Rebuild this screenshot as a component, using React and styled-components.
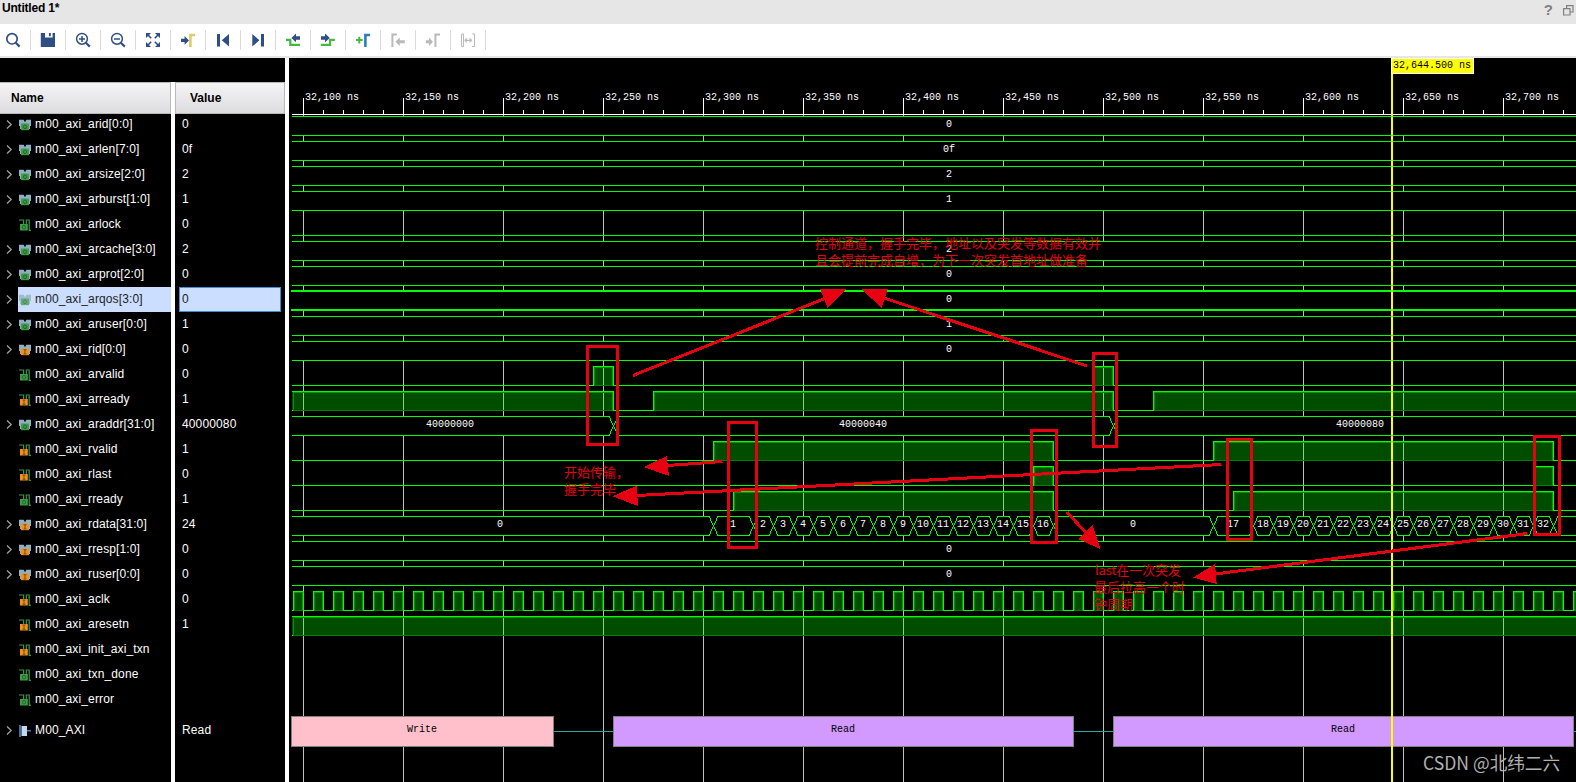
import React from 'react'
import styled, { createGlobalStyle } from 'styled-components'

const GlobalStyle = createGlobalStyle`
    body {
        margin: 0;
        overflow: hidden;
        background: #000;
        font-family: "Liberation Sans", Arial, sans-serif;
        font-size: 12px;
    }
`
const Window = styled.div`
    width: 1576px;
    height: 782px;
    display: flex;
    flex-direction: column;
    overflow: hidden;
`
const TitleBar = styled.div`
    height: 24px;
    flex: none;
    box-sizing: border-box;
    padding: 0 2px 0 2px;
    display: flex;
    justify-content: space-between;
    background: #e6e6e6;
`
const Title = styled.div`
    line-height: 16px;
    font-weight: bold;
    letter-spacing: -0.2px;
    color: #000;
`
const TitleActions = styled.div`
    display: flex;
    gap: 10px;
    padding-top: 2px;
    color: #808080;
    font-size: 15px;
    font-weight: bold;
    line-height: 16px;
    svg {
        margin-top: 3px;
    }
`
const Toolbar = styled.div`
    height: 34px;
    flex: none;
    box-sizing: border-box;
    display: flex;
    padding-top: 6px;
    margin-left: -4px;
    background: #fff;
    border-bottom: 2px solid #e6e6e6;
`
const ToolButton = styled.div`
    width: 35px;
    height: 20px;
    box-sizing: border-box;
    display: flex;
    align-items: center;
    justify-content: center;
    border-right: 1px solid #d9d9d9;
`
const Body = styled.div`
    flex: 1;
    display: flex;
    min-height: 0;
`
const SignalPane = styled.div`
    width: 285px;
    flex: none;
    display: flex;
    padding-top: 24px;
    color: #fff;
    border-right: 4px solid #fff;
`
const Column = styled.div`
    width: ${p => p.$width}px;
    flex: none;
    ${p => p.$divider && 'border-right: 4px solid #fff;'}
`
const ColumnHeader = styled.div`
    position: relative;
    z-index: 1;
    height: 32px;
    line-height: 30px;
    box-sizing: border-box;
    padding-left: ${p => p.$indent}px;
    font-weight: bold;
    color: #000;
    background: linear-gradient(#f4f4f5, #dddde0);
    border: 1px solid #b9b9b9;
    border-left: ${p => (p.$edge ? '1px solid #b9b9b9' : 'none')};
`
const Rows = styled.div`
    margin-top: -2px;
`
const NameRow = styled.div`
    height: ${p => (p.$tall ? 37 : 25)}px;
    display: flex;
    align-items: center;
`
const Toggle = styled.div`
    width: 18px;
    flex: none;
    height: 100%;
    display: flex;
    align-items: center;
    box-sizing: border-box;
    padding-left: 6px;
`
const NameCell = styled.div`
    flex: 1;
    height: 100%;
    display: flex;
    align-items: center;
    gap: 4px;
    padding-left: 1px;
    letter-spacing: 0.13px;
    color: ${p => (p.$selected ? '#222' : '#fff')};
    background: ${p => (p.$selected ? '#ccdeff' : 'transparent')};
    span {
        margin-top: -1px;
    }
`
const ValueCell = styled.div`
    height: ${p => (p.$tall ? 37 : 25)}px;
    line-height: ${p => (p.$tall ? 35 : 22)}px;
    box-sizing: border-box;
    margin: 0 4px;
    padding-left: 2px;
    letter-spacing: 0.13px;
    border: 1px solid ${p => (p.$selected ? '#3c8fd0' : 'transparent')};
    color: ${p => (p.$selected ? '#222' : '#fff')};
    background: ${p => (p.$selected ? '#ccdeff' : 'transparent')};
`
const WavePane = styled.div`
    flex: 1;
    min-width: 0;
    svg {
        display: block;
    }
`
const WaveText = styled.text`
    font-family: "Liberation Mono", "Courier New", monospace;
    font-size: 11px;
    fill: ${p => p.$color || '#fff'};
`
const NoteText = styled.text`
    font-family: "Noto Sans CJK SC", sans-serif;
    font-size: 13px;
    fill: #e60012;
`
const Watermark = styled.text`
    font-family: "Noto Sans CJK SC", sans-serif;
    font-size: 18px;
    fill: #b0b0b0;
`

const NAVY = '#2f4e85'
const GREEN = '#44b93f'
const GREY = '#b9b9b9'

const icons = {
    search: (
        <g fill="none" stroke={NAVY} strokeWidth="1.7">
            <circle cx="7" cy="6.8" r="5.2" />
            <path d="M10.8 10.8L14.6 14.6" strokeWidth="2.2" />
        </g>
    ),
    save: <path fill={NAVY} d="M.8 1H5v4.6h7.6V1H15v14H.8zM9 1h1.8v3.2H9z" />,
    zoomIn: (
        <g fill="none" stroke={NAVY} strokeWidth="1.5">
            <circle cx="7" cy="6.8" r="5.4" />
            <path d="M10.8 10.8L14.8 14.6" strokeWidth="2.2" />
            <path d="M4 7h6M7 4v6" />
        </g>
    ),
    zoomOut: (
        <g fill="none" stroke={NAVY} strokeWidth="1.5">
            <circle cx="7" cy="6.8" r="5.4" />
            <path d="M10.8 10.8L14.8 14.6" strokeWidth="2.2" />
            <path d="M4 7h6" />
        </g>
    ),
    fit: (
        <g fill={NAVY} stroke={NAVY}>
            <path d="M1 1h5L1 6zM15 1v5l-5-5zM1 15v-5l5 5zM15 15h-5l5-5z" stroke="none" />
            <path d="M3 3l3.2 3.2M13 3L9.8 6.2M3 13l3.2-3.2M13 13L9.8 9.8" strokeWidth="1.6" />
        </g>
    ),
    gotoCursor: (
        <g>
            <path fill={NAVY} d="M1 6.8h3.6V4L9 8.4 4.6 12.8V10H1z" />
            <path fill="none" stroke="#e2ca68" strokeWidth="2.6" d="M10.4 15V3H15" />
        </g>
    ),
    first: <path fill={NAVY} d="M2 2h3v12.4H2zM14 2v12.4L6.8 8.2z" />,
    last: <path fill={NAVY} d="M11 2h3v12.4h-3zM2.3 2v12.4L9.4 8.2z" />,
    prevEdge: (
        <g>
            <path fill="none" stroke={GREEN} strokeWidth="2.2" d="M1 7.8h4.3v5.1H15" />
            <path fill={NAVY} d="M15 4.2h-4V1.6L6.4 6 11 10.3V7.8h4z" />
        </g>
    ),
    nextEdge: (
        <g>
            <path fill="none" stroke={GREEN} strokeWidth="2.2" d="M.8 12.9h9.3V7.8h4.7" />
            <path fill={NAVY} d="M1 4.2h4V1.6L9.8 6 5 10.3V7.8H1z" />
        </g>
    ),
    addMarker: (
        <g fill="none">
            <path stroke={GREEN} strokeWidth="2" d="M1 8h6.6M4.3 4.8v6.6" />
            <path stroke="#2d7fb8" strokeWidth="2.6" d="M10.4 15V3H15" />
        </g>
    ),
    prevMarker: (
        <g>
            <path fill="none" stroke={GREY} strokeWidth="2" d="M2.4 15V2.5h4.4" />
            <path fill={GREY} d="M14.8 8.2h-5V5.4L5.4 9.8l4.4 4.2v-2.8h5z" />
        </g>
    ),
    nextMarker: (
        <g>
            <path fill={GREY} d="M.8 8.2h3.2V5.4L8 9.8 4 14v-2.8H.8z" />
            <path fill="none" stroke={GREY} strokeWidth="2" d="M10.4 15V2.5H15" />
        </g>
    ),
    span: (
        <g fill="none" stroke={GREY}>
            <path strokeWidth="1" d="M1.5 2v12.5h2V2zM12 2h2.5v12.5H12" />
            <path strokeWidth="1.2" d="M5 8.3h6.5M7 6.3L5 8.3l2 2M9.5 6.3l2 2-2 2" />
        </g>
    ),
}

const Icon = ({ name }) => (
    <svg width="16" height="16" viewBox="0 0 16 16">{icons[name]}</svg>
)

// first letter: b = bus, s = scalar. second letter: o = output, i = input
const SignalIcon = ({ kind, dim }) => {
    if (kind === 'port') {
        return (
            <svg width="12" height="12" viewBox="0 0 12 12">
                <path fill="#3f6fa3" d="M0 0h2v12H0z" />
                <path fill="#c3d9ee" d="M2.5 1H8v10H2.5z" />
                <path fill="#4c7db0" d="M8 5h4v1.5H8z" />
            </svg>
        )
    }
    const isBus = kind[0] === 'b'
    const input = kind[1] === 'i'
    const badge = input ? '#f0901f' : '#3f9c45'
    return (
        <svg width="12" height="12" viewBox="0 0 12 12" opacity={dim ? 0.75 : 1}>
            {isBus ? (
                <path fill="#8fb0c4" d="M0 .8h4.6L6 3.2 7.400 .8H12V7h-1v3H1V7H0z" />
            ) : (
                <path fill="none" stroke="#389648" strokeWidth="1.2" d="M0 1h4.600v4M7.300 .5V5M7 1h3.200v10.300H12" />
            )}
            <path fill={badge} d={isBus ? 'M2 4.500h8v6.700H2z' : 'M1 5h7.800v6.500H1z'} />
            {input ? (
                <path
                    fill="none"
                    stroke="#7a4c17"
                    d={isBus ? 'M4.500 5.700h3M6 5.700V10M4.500 10h3' : 'M3.500 6h3M5 6V10.300M3.500 10.300h3'}
                />
            ) : (
                <ellipse cx={isBus ? 6 : 5} cy={isBus ? 7.8 : 8.2} rx="1.500" ry="1.900" fill="none" stroke="#25662d" />
            )}
        </svg>
    )
}

const VIEW_START = 287
const VIEW_END = 1611
const PANE_LEFT = 292
const PANE_RIGHT = 1576

const beats = first => {
    const start = first === 1 ? 713 : 1213
    return Array.from({ length: 16 }, (_, i) => ({
        from: i === 0 ? start : start + 20 + i * 20,
        to: start + 40 + i * 20,
        label: String(first + i),
    }))
}

const whole = label => [{ from: VIEW_START, to: VIEW_END, label }]
const clock = Array.from({ length: 65 }, (_, i) => [293 + i * 20, 303 + i * 20])

const signals = [
    { name: 'arid[0:0]', icon: 'bo', value: '0', bus: whole('0') },
    { name: 'arlen[7:0]', icon: 'bo', value: '0f', bus: whole('0f') },
    { name: 'arsize[2:0]', icon: 'bo', value: '2', bus: whole('2') },
    { name: 'arburst[1:0]', icon: 'bo', value: '1', bus: whole('1') },
    { name: 'arlock', icon: 'so', value: '0', high: [] },
    { name: 'arcache[3:0]', icon: 'bo', value: '2', bus: whole('2') },
    { name: 'arprot[2:0]', icon: 'bo', value: '0', bus: whole('0') },
    { name: 'arqos[3:0]', icon: 'bo', value: '0', bus: whole('0'), selected: true },
    { name: 'aruser[0:0]', icon: 'bo', value: '1', bus: whole('1') },
    { name: 'rid[0:0]', icon: 'bi', value: '0', bus: whole('0') },
    { name: 'arvalid', icon: 'so', value: '0', high: [[593, 613], [1093, 1113]] },
    { name: 'arready', icon: 'si', value: '1', high: [[292, 613], [653, 1113], [1153, VIEW_END]] },
    {
        name: 'araddr[31:0]', icon: 'bo', value: '40000080',
        bus: [
            { from: VIEW_START, to: 613, label: '40000000' },
            { from: 613, to: 1113, label: '40000040' },
            { from: 1113, to: VIEW_END - 4, label: '40000080' },
        ],
    },
    { name: 'rvalid', icon: 'si', value: '1', high: [[713, 1053], [1213, 1553]] },
    { name: 'rlast', icon: 'si', value: '0', high: [[1033, 1053], [1533, 1553]] },
    { name: 'rready', icon: 'so', value: '1', high: [[733, 1053], [1233, 1553]] },
    {
        name: 'rdata[31:0]', icon: 'bi', value: '24',
        bus: [
            { from: VIEW_START, to: 713, label: '0' },
            ...beats(1),
            { from: 1053, to: 1213, label: '0' },
            ...beats(17),
            { from: 1553, to: VIEW_END, label: '' },
        ],
    },
    { name: 'rresp[1:0]', icon: 'bi', value: '0', bus: whole('0') },
    { name: 'ruser[0:0]', icon: 'bi', value: '0', bus: whole('0') },
    { name: 'aclk', icon: 'si', value: '0', high: clock },
    { name: 'aresetn', icon: 'si', value: '1', high: [[292, VIEW_END]] },
    { name: 'init_axi_txn', icon: 'si', value: '' },
    { name: 'txn_done', icon: 'so', value: '' },
    { name: 'error', icon: 'so', value: '' },
]

const transactions = [
    { from: 291, to: 553, label: 'Write', color: '#ffc0cb' },
    { from: 613, to: 1073, label: 'Read', color: '#d299ff' },
    { from: 1113, to: 1573, label: 'Read', color: '#d299ff' },
]

const boxes = [
    [586, 345, 619, 446],
    [1092, 352, 1118, 448],
    [727, 421, 758, 549],
    [1030, 429, 1058, 544],
    [1226, 438, 1253, 541],
    [1533, 435, 1561, 536],
]

const arrows = [
    { line: 'M633 375.500L826 298', head: '820,289 846,289 827.500,308' },
    { line: 'M1087 366L884 298', head: '862,289.500 888,288.500 881.500,308' },
    { line: 'M722.500 461.500L667 465.500', head: '644,467 666.700,456 669,476' },
    { line: 'M1221.500 464.500L637 495.500', head: '612.500,496.300 636.700,485.700 638,506' },
    { line: 'M1067 512L1086 533', head: '1100.500,549 1092.700,525 1078,539' },
    { line: 'M1527.500 533.500L1215 574', head: '1193,577.500 1215,564 1216.700,584' },
]

const notes = [
    { x: 815, y: 247.5, text: '控制通道，握手完毕，地址以及突发等数据有效并', width: 286 },
    { x: 815, y: 264.5, text: '且会提前完成自增，为下一次突发首地址做准备', width: 273 },
    { x: 564, y: 476.5, text: '开始传输，', width: 65 },
    { x: 564, y: 493.5, text: '握手完毕', width: 52 },
    { x: 1095, y: 574.5, text: 'last在一次突发', width: 86 },
    { x: 1094, y: 591.5, text: '最后拉高一个时', width: 91 },
    { x: 1094, y: 608.5, text: '钟周期', width: 39 },
]

const Label = ({ x, y, color, center, children }) => {
    const width = children.length * 6
    return (
        <WaveText
            x={center ? x - width / 2 : x}
            y={y}
            $color={color}
            textLength={width}
            lengthAdjust="spacingAndGlyphs"
            xmlSpace="preserve"
        >
            {children}
        </WaveText>
    )
}

const BitWave = ({ top, high }) => {
    const bottom = top + 19
    let x = PANE_LEFT
    let low = ''
    let edges = ''
    high.forEach(([from, to]) => {
        low += `M${x} ${bottom + 0.5}H${from + 1}`
        // a level that is already high at the pane border has no rising edge
        edges += from === PANE_LEFT
            ? `M${from} ${top + 0.5}`
            : `M${from + 0.5} ${bottom + 1}V${top + 0.5}`
        edges += `H${to + 0.5}V${bottom + 1}`
        x = to
    })
    if (x < PANE_RIGHT) low += `M${x} ${bottom + 0.5}H${PANE_RIGHT}`
    return (
        <g shapeRendering="crispEdges" fill="none">
            {high.map(([from, to]) => (
                <g key={from}>
                    <rect x={from} y={top} width={to - from} height={20} fill="#00ff00" fillOpacity="0.3" />
                    <path
                        stroke="#009400"
                        d={`M${from + 1.5} ${bottom}V${top + 1.5}H${to - 0.5}V${bottom}`}
                    />
                    <path stroke="#008000" d={`M${from + 1} ${bottom + 0.5}H${to}`} />
                </g>
            ))}
            <path stroke="#00ff00" d={low} />
            {high.map(([from, to]) => (
                <path key={from} stroke="#008000" d={`M${from + 1} ${bottom + 0.5}H${to}`} />
            ))}
            <path stroke="#00ff00" d={edges} />
        </g>
    )
}

const BusWave = ({ top, bus, selected }) => {
    const bottom = top + 19
    const upperY = selected ? top : top + 0.5
    const lowerY = selected ? bottom : bottom + 0.5
    return (
        <g>
            <rect x={PANE_LEFT} y={top} width={PANE_RIGHT - PANE_LEFT} height={20} fill="#000" />
            {bus.map(({ from, to, label }, i) => {
                const left = i === 0 ? (selected ? 291 : PANE_LEFT) : from + 4
                const right = i === bus.length - 1 ? PANE_RIGHT : to - 3
                return (
                    <g key={from}>
                        <path
                            shapeRendering="crispEdges"
                            stroke="#00ff00"
                            strokeWidth={selected ? 2 : 1}
                            d={`M${left} ${upperY}H${right}M${left} ${lowerY}H${right}`}
                        />
                        {i > 0 && (
                            <path
                                fill="none"
                                stroke="#00ff00"
                                shapeRendering="crispEdges"
                                d={`M${from - 3.5} ${top + 0.5}L${from - 2} ${top + 5}L${from + 3} ${top + 15}L${from + 4.500} ${bottom + 0.5}M${from + 4.500} ${top + 0.5}L${from + 3} ${top + 5}L${from - 2} ${top + 15}L${from - 3.5} ${bottom + 0.5}`}
                            />
                        )}
                        <Label x={(from + to) / 2} y={top + 11} center>{label}</Label>
                    </g>
                )
            })}
        </g>
    )
}

const majors = Array.from({ length: 13 }, (_, i) => 303 + i * 100)

const Ruler = () => (
    <g>
        <g shapeRendering="crispEdges" stroke="#fff">
            <path d={`M${PANE_LEFT} 114.5H${PANE_RIGHT}`} />
            {majors.map(x => (
                <path
                    key={x}
                    d={`M${x + 0.5} 98V115M${x + 20.5} 110V114M${x + 40.5} 110V114M${x + 60.5} 110V114M${x + 80.5} 110V114`}
                />
            ))}
        </g>
        {majors.map((x, i) => (
            <Label key={x} x={x + 2} y={100}>{`32,${100 + i * 50} ns`}</Label>
        ))}
    </g>
)

const Transactions = () => (
    <g shapeRendering="crispEdges">
        <path stroke="#2fa8a0" d={`M${PANE_LEFT} 731.5H${PANE_RIGHT}`} />
        {transactions.map(t => (
            <g key={t.from}>
                <rect x={t.from + 0.5} y="716.5" width={t.to - t.from} height="30" fill={t.color} stroke="#808080" />
                <Label x={(t.from + t.to) / 2} y={732} center color="#000">{t.label}</Label>
            </g>
        ))}
    </g>
)

const Annotations = () => (
    <g>
        {boxes.map(([x1, y1, x2, y2]) => (
            <rect
                key={x1}
                x={x1 + 1.5}
                y={y1 + 1.5}
                width={x2 - x1 - 3}
                height={y2 - y1 - 3}
                fill="none"
                stroke="#e60012"
                strokeWidth="3"
            />
        ))}
        {arrows.map(a => (
            <g key={a.line} shapeRendering="crispEdges">
                <path d={a.line} stroke="#e60012" strokeWidth="3" />
                <polygon points={a.head} fill="#e60012" />
            </g>
        ))}
        {notes.map(n => (
            <NoteText key={n.text} x={n.x} y={n.y} textLength={n.width}>{n.text}</NoteText>
        ))}
    </g>
)

const Waveform = () => (
    <svg width="1287" height="724" viewBox="289 58 1287 724">
        <rect x="289" y="58" width="1287" height="724" fill="#000" />
        <g shapeRendering="crispEdges" stroke="#c0c0c0">
            {majors.map(x => <path key={x} d={`M${x + 0.5} 115V782`} />)}
        </g>
        <Ruler />
        {signals.map((s, i) => {
            const top = 116 + i * 25
            if (s.bus) return <BusWave key={s.name} top={top} bus={s.bus} selected={s.selected} />
            if (s.high) return <BitWave key={s.name} top={top} high={s.high} />
            return null
        })}
        <Transactions />
        <g shapeRendering="crispEdges">
            <rect x="1391" y="58" width="2" height="724" fill="#ffff00" />
            <rect x="1391.5" y="58.5" width="82" height="15" fill="#ffff00" stroke="#fff" />
        </g>
        <Label x={1393} y={68} color="#000">32,644.500 ns</Label>
        <Annotations />
        <Watermark x="1423" y="769.500" textLength="137" lengthAdjust="spacingAndGlyphs">CSDN @北纬二六</Watermark>
    </svg>
)

const Chevron = () => (
    <svg width="7" height="9" viewBox="0 0 7 9">
        <path d="M1 .5L5.200 4.500L1 8.500" fill="none" stroke="#a0a0a0" strokeWidth="1.300" />
    </svg>
)

export default function App() {
    return (
        <Window>
            <GlobalStyle />
            <TitleBar>
                <Title>Untitled 1*</Title>
                <TitleActions>
                    <span>?</span>
                    <svg width="11" height="11" viewBox="0 0 11 11" fill="none" stroke="#808080" strokeWidth="1.200">
                        <path d="M.6 3.600h6.400v6.400H.6zM3.600 3.600V.6H10v6.400H7" />
                    </svg>
                </TitleActions>
            </TitleBar>
            <Toolbar>
                {Object.keys(icons).map(name => (
                    <ToolButton key={name}><Icon name={name} /></ToolButton>
                ))}
            </Toolbar>
            <Body>
                <SignalPane>
                    <Column $width={171} $divider>
                        <ColumnHeader $indent={11}>Name</ColumnHeader>
                        <Rows>
                            {signals.map(s => (
                                <NameRow key={s.name}>
                                    <Toggle>{s.bus && <Chevron />}</Toggle>
                                    <NameCell $selected={s.selected}>
                                        <SignalIcon kind={s.icon} dim={s.selected} />
                                        <span>m00_axi_{s.name}</span>
                                    </NameCell>
                                </NameRow>
                            ))}
                            <NameRow $tall>
                                <Toggle><Chevron /></Toggle>
                                <NameCell>
                                    <SignalIcon kind="port" />
                                    <span>M00_AXI</span>
                                </NameCell>
                            </NameRow>
                        </Rows>
                    </Column>
                    <Column $width={110}>
                        <ColumnHeader $indent={14} $edge>Value</ColumnHeader>
                        <Rows>
                            {signals.map(s => (
                                <ValueCell key={s.name} $selected={s.selected}>{s.value}</ValueCell>
                            ))}
                            <ValueCell $tall>Read</ValueCell>
                        </Rows>
                    </Column>
                </SignalPane>
                <WavePane>
                    <Waveform />
                </WavePane>
            </Body>
        </Window>
    )
}
